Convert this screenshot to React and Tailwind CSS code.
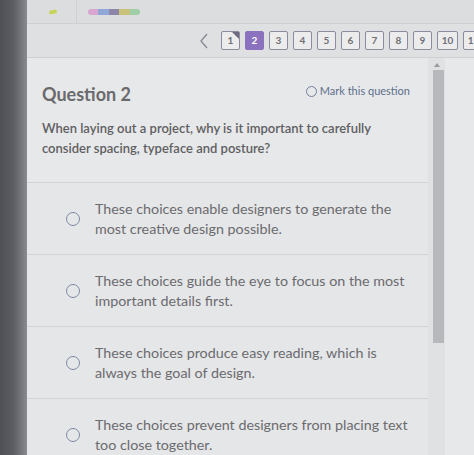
import React from 'react';

const PAGES = ['1', '2', '3', '4', '5', '6', '7', '8', '9', '10', '11'];

const OPTIONS = [
    ['These choices enable designers to generate the', 'most creative design possible.'],
    ['These choices guide the eye to focus on the most', 'important details first.'],
    ['These choices produce easy reading, which is', 'always the goal of design.'],
    ['These choices prevent designers from placing text', 'too close together.'],
];

function PageBox({ label }) {
    const current = label === '2';
    const visited = label === '1';
    return (
        <div
            className={
                'relative flex h-[19px] shrink-0 items-center justify-center rounded-[2px] border text-[10px] font-bold ' +
                (label.length > 1 ? 'w-[21px] ' : 'w-[19px] ') +
                (current
                    ? 'border-[#8a72bf] bg-[#8a72bf] text-white'
                    : 'border-[#8e8aa0] bg-[#ececec] text-[#6f6f78]')
            }
        >
            {label}
            {visited && (
                <span className="absolute right-0 top-0 h-0 w-0 border-l-[7px] border-t-[7px] border-l-transparent border-t-[#6e6a80]" />
            )}
        </div>
    );
}

export default function App() {
    return (
        <div
            className="flex h-[455px] w-[474px] overflow-hidden bg-[#e2e3e5] text-[#666]"
            style={{ fontFamily: 'Lato, "Liberation Sans", sans-serif' }}
        >
            {/* bezel */}
            <div className="w-[27px] shrink-0 bg-gradient-to-r from-[#4f5056] via-[#5d5e64] to-[#8a8b90]" />

            <div className="flex flex-1 flex-col">
                {/* top strip */}
                <div className="flex h-[24px] shrink-0 items-center border-b border-[#cfd0d2] bg-[#dcdddf]">
                    <div className="flex h-full w-[50px] items-center border-r border-[#cfd0d2] pl-[22px]">
                        <span className="h-[4px] w-[8px] -rotate-12 rounded-full bg-[#c8d35a]" />
                    </div>
                    <div className="ml-[11px] flex h-[6px] w-[52px] overflow-hidden rounded-full">
                        <span className="flex-1 bg-[#d9a6cf]" />
                        <span className="flex-1 bg-[#8fa8d8]" />
                        <span className="flex-1 bg-[#8d86a8]" />
                        <span className="flex-1 bg-[#c9c27a]" />
                        <span className="flex-1 bg-[#9fcfa8]" />
                    </div>
                </div>

                {/* pagination */}
                <div className="flex h-[34px] shrink-0 items-center gap-[5px] overflow-hidden border-b border-[#cfd0d2] bg-[#dfe0e2] pl-[171px]">
                    <svg width="12" height="16" viewBox="0 0 12 16" className="mr-[6px] shrink-0">
                        <path d="M9 1 L3 8 L9 15" fill="none" stroke="#8a8c94" strokeWidth="1.4" />
                    </svg>
                    {PAGES.map((p) => (
                        <PageBox key={p} label={p} />
                    ))}
                </div>

                {/* body */}
                <div className="flex flex-1">
                    <div className="w-[401px] shrink-0 bg-[#e5e6e8]">
                        <div className="h-[125px] border-b border-[#d2d3d6] bg-[#e7e8ea] pl-[15px] pr-[18px]">
                            <div className="flex items-center justify-between pt-[25px]">
                                <h1 className="text-[18px] font-bold leading-[22px] text-[#6a6a6c]">Question 2</h1>
                                <div className="-mt-[5px] flex items-center gap-[3px] text-[11px] text-[#5d6f8c]">
                                    <span className="h-[11px] w-[11px] rounded-full border-[1.5px] border-[#6f7f9c]" />
                                    Mark this question
                                </div>
                            </div>
                            <p className="mt-[13px] text-[13px] font-semibold leading-[20px] text-[#5f5f62]">
                                When laying out a project, why is it important to carefully
                                <br />
                                consider spacing, typeface and posture?
                            </p>
                        </div>

                        {OPTIONS.map((o) => (
                            <div key={o[0]} className="flex h-[72px] items-center border-b border-[#d2d3d6] pl-[39px]">
                                <span className="h-[14px] w-[14px] shrink-0 rounded-full border-[1.5px] border-[#7d8aa4]" />
                                <p className="ml-[15px] text-[14.3px] leading-[20px] text-[#6b6b6e]">
                                    {o[0]}
                                    <br />
                                    {o[1]}
                                </p>
                            </div>
                        ))}
                    </div>

                    {/* scrollbar */}
                    <div className="flex w-[17px] shrink-0 flex-col items-center bg-[#e0e1e3]">
                        <svg width="6" height="4" viewBox="0 0 6 4" className="mt-[5px]">
                            <path d="M0 4 L3 0 L6 4 Z" fill="#9a9b9f" />
                        </svg>
                        <div className="ml-[4px] mt-[3px] h-[273px] w-[11px] bg-[#b7b8bb]" />
                    </div>

                    <div className="flex-1 bg-[#e7e8ea]" />
                </div>
            </div>
        </div>
    );
}
